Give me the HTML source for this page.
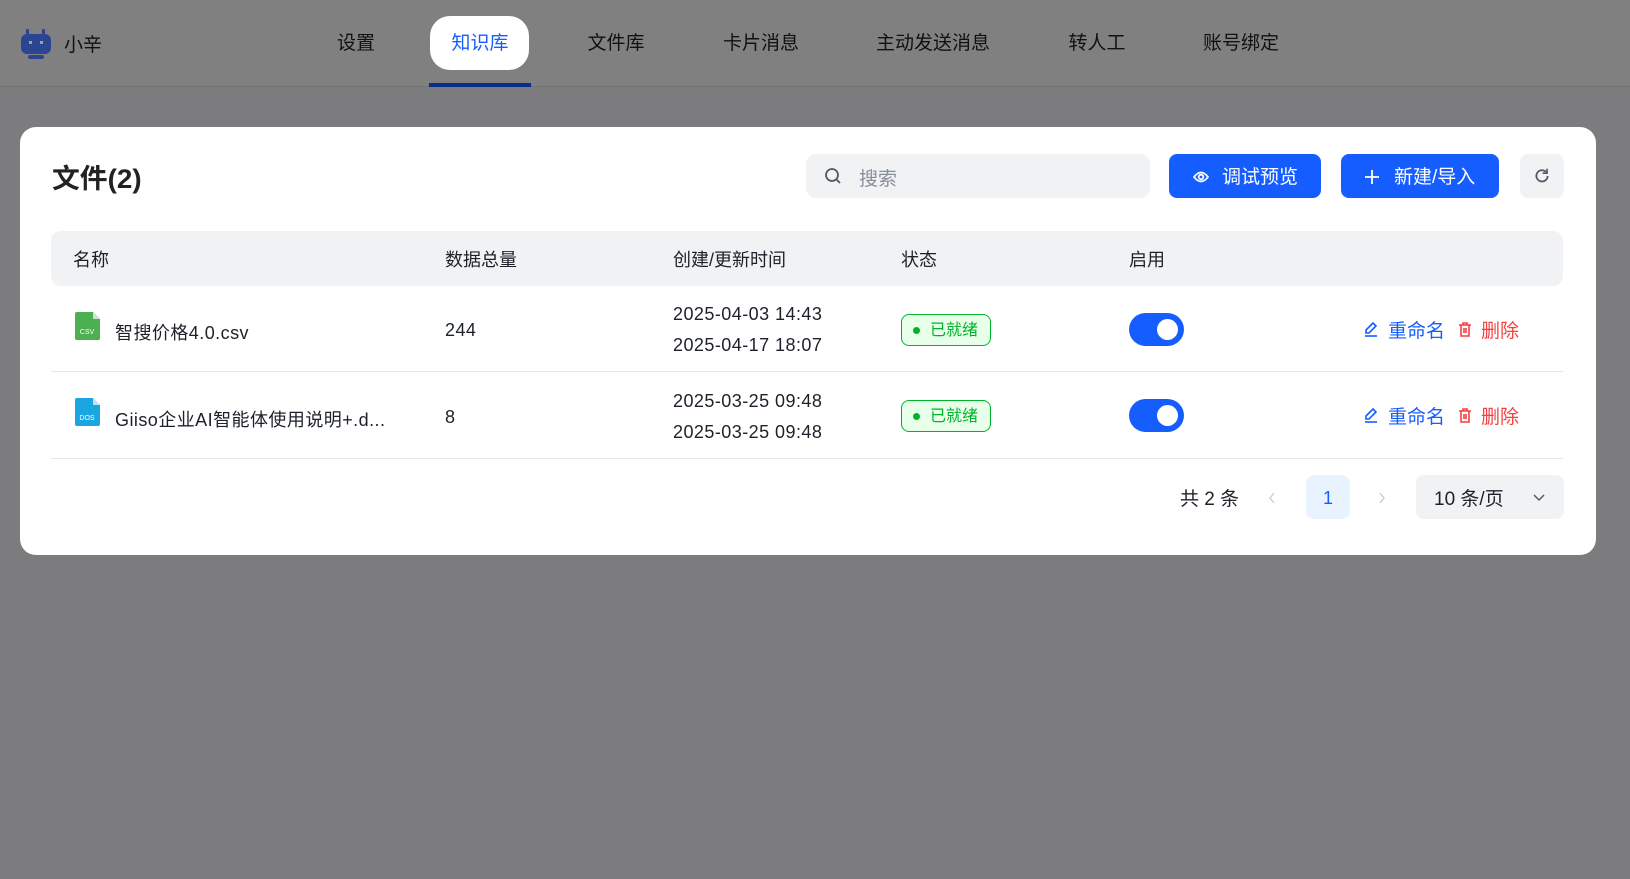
<!DOCTYPE html>
<html><head><meta charset="utf-8"><style>
*{margin:0;padding:0;box-sizing:border-box}
body{width:1630px;height:879px;background:#7c7c7e;font-family:"Liberation Sans","Noto Sans CJK SC",sans-serif;position:relative;overflow:hidden;color:#1d2129}
.a{position:absolute;white-space:nowrap}
.hdr{position:absolute;left:0;top:0;width:1630px;height:87px;background:#808080;border-bottom:1px solid #737373}
.tab{position:absolute;top:28px;font-size:19px;color:#111;transform:translateX(-50%)}
.card{position:absolute;left:20px;top:127px;width:1576px;height:428px;background:#fff;border-radius:16px}
.th{font-size:18px;color:#1d2129;top:246px}
.td{font-size:18px;color:#1d2129}
.dt{letter-spacing:0.45px}
.tag{position:absolute;width:90px;height:32px;border:1px solid #00b42a;background:#e8ffea;border-radius:8px;color:#00b42a;font-size:16px;line-height:31px;padding-left:28px}
.tag:before{content:"";position:absolute;left:11px;top:12px;width:7px;height:7px;border-radius:50%;background:#00b42a}
.sw{position:absolute;width:55px;height:33px;border-radius:17px;background:#165dff}
.sw:after{content:"";position:absolute;right:6px;top:6px;width:21px;height:21px;border-radius:50%;background:#fff}
.btn{position:absolute;top:154px;height:44px;background:#165dff;border-radius:8px;color:#fff;font-size:19px;line-height:47px}
</style></head><body>
<div class="hdr"></div>
<svg class="a" style="left:20px;top:28px" width="32" height="32" viewBox="0 0 32 32"><rect x="6" y="1" width="3" height="7" rx="1" fill="#2c4592"/><rect x="22" y="1" width="3" height="7" rx="1" fill="#2c4592"/><rect x="1" y="6" width="30" height="20" rx="6" fill="#2c4592"/><rect x="9" y="13" width="3" height="3" fill="#8aa"/><rect x="20" y="13" width="3" height="3" fill="#8aa"/><rect x="8" y="27" width="16" height="4" rx="2" fill="#2c4592"/></svg>
<div class="a" style="left:64px;top:30px;font-size:19px;color:#111">小辛</div>
<div class="a" style="left:430px;top:16px;width:99px;height:54px;background:#fff;border-radius:20px"></div>
<div class="a" style="left:429px;top:83px;width:102px;height:4px;background:#0a2d8c"></div>
<div class="tab" style="left:356px">设置</div>
<div class="tab" style="left:480px;color:#165dff">知识库</div>
<div class="tab" style="left:616px">文件库</div>
<div class="tab" style="left:761px">卡片消息</div>
<div class="tab" style="left:933px">主动发送消息</div>
<div class="tab" style="left:1097px">转人工</div>
<div class="tab" style="left:1241px">账号绑定</div>
<div class="card"></div>
<div class="a" style="left:52px;top:157px;font-size:27px;font-weight:bold;color:#222;transform:scaleX(1.03);transform-origin:left">文件(2)</div>
<div class="a" style="left:806px;top:154px;width:344px;height:44px;background:#f1f2f4;border-radius:10px"></div>
<svg class="a" style="left:824px;top:167px" width="18" height="18" viewBox="0 0 18 18"><circle cx="8" cy="8" r="6" fill="none" stroke="#4e5969" stroke-width="1.8"/><path d="M12.5 12.5l3.5 3.5" stroke="#4e5969" stroke-width="1.8"/></svg>
<div class="a" style="left:859px;top:164px;font-size:19px;color:#86909c">搜索</div>
<div class="btn" style="left:1169px;width:152px;padding-left:53px">调试预览</div>
<svg class="a" style="left:1193px;top:170px" width="16" height="14" viewBox="0 0 16 14"><path d="M1 7Q8 -2 15 7Q8 16 1 7Z" fill="none" stroke="#fff" stroke-width="1.8"/><circle cx="8" cy="7" r="2.3" fill="none" stroke="#fff" stroke-width="1.8"/></svg>
<div class="btn" style="left:1341px;width:158px;padding-left:53px">新建/导入</div>
<svg class="a" style="left:1364px;top:169px" width="16" height="16" viewBox="0 0 16 16"><path d="M8 1v14M1 8h14" stroke="#fff" stroke-width="1.8"/></svg>
<div class="a" style="left:1520px;top:154px;width:44px;height:44px;background:#f1f2f4;border-radius:8px"></div>
<svg class="a" style="left:1533px;top:167px" width="18" height="18" viewBox="0 0 16 16"><path d="M13 8A5 5 0 1 1 11.5 4.3" fill="none" stroke="#4e5969" stroke-width="1.6"/><path d="M12.5 1.5v4h-4" fill="none" stroke="#4e5969" stroke-width="1.5"/></svg>
<div class="a" style="left:51px;top:231px;width:1512px;height:55px;background:#f1f2f4;border-radius:10px"></div>
<div class="a th" style="left:73px">名称</div>
<div class="a th" style="left:445px">数据总量</div>
<div class="a th" style="left:673px">创建/更新时间</div>
<div class="a th" style="left:901px">状态</div>
<div class="a th" style="left:1129px">启用</div>
<div class="a" style="left:51px;top:371px;width:1512px;height:1px;background:#e5e6eb"></div>
<div class="a" style="left:51px;top:458px;width:1512px;height:1px;background:#e5e6eb"></div>
<svg class="a" style="left:75px;top:312px" width="25" height="28" viewBox="0 0 25 28"><path d="M2 0h16l7 7v19a2 2 0 0 1-2 2H2a2 2 0 0 1-2-2V2a2 2 0 0 1 2-2z" fill="#4caf50"/><path d="M18 0v7h7z" fill="#c8e6c9"/><text x="12" y="22" font-size="7" fill="#fff" text-anchor="middle" font-family="Liberation Sans">CSV</text></svg>
<div class="a td dt" style="left:115px;top:319px">智搜价格4.0.csv</div>
<div class="a td dt" style="left:445px;top:320px">244</div>
<div class="a td dt" style="left:673px;top:304px">2025-04-03 14:43</div>
<div class="a td dt" style="left:673px;top:335px">2025-04-17 18:07</div>
<div class="tag" style="left:901px;top:314px">已就绪</div>
<div class="sw" style="left:1129px;top:313px"></div>
<svg class="a" style="left:75px;top:398px" width="25" height="28" viewBox="0 0 25 28"><path d="M2 0h16l7 7v19a2 2 0 0 1-2 2H2a2 2 0 0 1-2-2V2a2 2 0 0 1 2-2z" fill="#1aa6e0"/><path d="M18 0v7h7z" fill="#bde5f5"/><text x="12" y="22" font-size="7" fill="#fff" text-anchor="middle" font-family="Liberation Sans">DOS</text></svg>
<div class="a td dt" style="left:115px;top:406px">Giiso企业AI智能体使用说明+.d...</div>
<div class="a td dt" style="left:445px;top:407px">8</div>
<div class="a td dt" style="left:673px;top:391px">2025-03-25 09:48</div>
<div class="a td dt" style="left:673px;top:422px">2025-03-25 09:48</div>
<div class="tag" style="left:901px;top:400px">已就绪</div>
<div class="sw" style="left:1129px;top:399px"></div>
<svg class="a" style="left:1364px;top:321px" width="15" height="16" viewBox="0 0 15 16"><path d="M9 2l3 3-7 7H2V9z" fill="none" stroke="#165dff" stroke-width="1.6"/><path d="M1 15h12" stroke="#165dff" stroke-width="1.6"/></svg>
<div class="a" style="left:1388px;top:316px;font-size:19px;color:#165dff">重命名</div>
<svg class="a" style="left:1458px;top:322px" width="14" height="15" viewBox="0 0 14 15"><path d="M1 3h12M5 3V1h4v2M3 3v11h8V3M6 6v5M8 6v5" fill="none" stroke="#f53f3f" stroke-width="1.6"/></svg>
<div class="a" style="left:1481px;top:316px;font-size:19px;color:#f53f3f">删除</div>
<svg class="a" style="left:1364px;top:407px" width="15" height="16" viewBox="0 0 15 16"><path d="M9 2l3 3-7 7H2V9z" fill="none" stroke="#165dff" stroke-width="1.6"/><path d="M1 15h12" stroke="#165dff" stroke-width="1.6"/></svg>
<div class="a" style="left:1388px;top:402px;font-size:19px;color:#165dff">重命名</div>
<svg class="a" style="left:1458px;top:408px" width="14" height="15" viewBox="0 0 14 15"><path d="M1 3h12M5 3V1h4v2M3 3v11h8V3M6 6v5M8 6v5" fill="none" stroke="#f53f3f" stroke-width="1.6"/></svg>
<div class="a" style="left:1481px;top:402px;font-size:19px;color:#f53f3f">删除</div>
<div class="a" style="left:1180px;top:484px;font-size:19px;color:#1d2129">共 2 条</div>
<svg class="a" style="left:1267px;top:491px" width="10" height="14" viewBox="0 0 10 14"><path d="M7 2L3 7l4 5" fill="none" stroke="#c9cdd4" stroke-width="1.4"/></svg>
<div class="a" style="left:1306px;top:475px;width:44px;height:44px;background:#e8f3ff;border-radius:8px;color:#165dff;font-size:18px;line-height:46px;text-align:center">1</div>
<svg class="a" style="left:1377px;top:491px" width="10" height="14" viewBox="0 0 10 14"><path d="M3 2l4 5-4 5" fill="none" stroke="#c9cdd4" stroke-width="1.4"/></svg>
<div class="a" style="left:1416px;top:475px;width:148px;height:44px;background:#f1f2f4;border-radius:8px"></div>
<div class="a" style="left:1434px;top:484px;font-size:19px;color:#1d2129">10 条/页</div>
<svg class="a" style="left:1532px;top:493px" width="14" height="10" viewBox="0 0 14 10"><path d="M2 2l5 5 5-5" fill="none" stroke="#4e5969" stroke-width="1.5"/></svg>
</body></html>
